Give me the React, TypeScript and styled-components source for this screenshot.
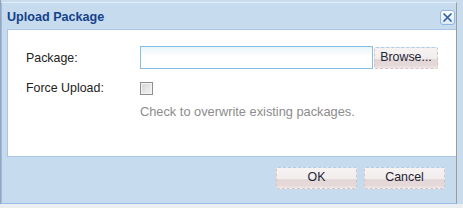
import React from 'react'
import styled, { createGlobalStyle } from 'styled-components'

const GlobalStyle = createGlobalStyle`
  html, body {
    margin: 0;
    padding: 0;
  }
  body {
    background: #e9edf1;
    font-family: "Liberation Sans", Arial, sans-serif;
  }
`

const Page = styled.div`
  width: 463px;
  height: 208px;
  box-sizing: border-box;
  background: #c9dcee;
  border-left: 1px solid #9aa5b1;
  display: flex;
  flex-direction: column;
`

const Stage = styled.div`
  padding-top: 2px;
  height: 204px;
  box-sizing: border-box;
`

const BottomStrip = styled.div`
  flex: 1;
  background: #eceff2;
  margin-left: -1px;
`

const Window = styled.div`
  width: 456px;
  height: 202px;
  box-sizing: border-box;
  border: 1px solid #99bbe8;
  border-top-color: #e3edf8;
  border-right-color: #9c9c9c;
  background: #c7dbee;
  display: flex;
  flex-direction: column;
`

const TitleBar = styled.div`
  height: 26px;
  flex: none;
  display: flex;
  align-items: center;
  justify-content: space-between;
  padding: 0 1px 0 5px;
`

const Title = styled.span`
  font-family: "Liberation Sans", Arial, sans-serif;
  font-weight: bold;
  font-size: 12.6px;
  color: #15428b;
  margin-top: 1px;
`

const CloseButton = styled.button`
  width: 15px;
  height: 15px;
  padding: 0;
  margin-top: 3px;
  border: 1px solid #8db6e2;
  border-radius: 3px;
  background: linear-gradient(#ffffff, #dbe8f6);
  display: flex;
  align-items: center;
  justify-content: center;
`

const Body = styled.div`
  height: 128px;
  flex: none;
  box-sizing: border-box;
  margin-left: 5px;
  background: #ffffff;
  border: 1px solid #a9c6e6;
  border-right: none;
  padding: 16px 0 0 18px;
`

const Row = styled.div<{ $top?: number }>`
  display: flex;
  align-items: center;
  margin-top: ${p => p.$top ?? 0}px;
`

const Label = styled.label`
  width: 114px;
  flex: none;
  font-size: 12.4px;
  color: #222;
`

const TextInput = styled.input`
  width: 233px;
  height: 23px;
  box-sizing: border-box;
  border: 1px solid #86bfe9;
  background: linear-gradient(#e9f5f9, #ffffff 9px);
  padding: 0 3px;
  margin: 0;
  outline: none;
`

const Button = styled.button<{ $w: number }>`
  width: ${p => p.$w}px;
  height: 22px;
  box-sizing: border-box;
  padding: 0 0 2px;
  border: 1px dashed #d7c2c4;
  border-top-color: #a8cfee;
  border-radius: 2px;
  background: linear-gradient(#f7f3f3 0, #f2eded 55%, #e3d6d6 58%, #e5d9d9 88%, #efe8e8 100%);
  font-family: "Liberation Sans", Arial, sans-serif;
  font-size: 12.4px;
  color: #1d2433;
`

const Checkbox = styled.span`
  width: 13px;
  height: 13px;
  box-sizing: border-box;
  border: 1px solid #8e8e8e;
  box-shadow: inset 0 0 0 1px #f4f4f4;
  background: linear-gradient(135deg, #d4d4d4, #f6f6f6);
  display: block;
`

const Help = styled.div`
  margin: 9px 0 0 114px;
  font-size: 12.8px;
  line-height: 16px;
  color: #8c8c8c;
`

const Footer = styled.div`
  flex: 1;
  display: flex;
  justify-content: flex-end;
  align-items: flex-start;
  gap: 7px;
  padding: 10px 11px 0 0;
`

export default function App() {
  return (
    <>
      <GlobalStyle />
      <Page>
        <Stage>
          <Window>
            <TitleBar>
              <Title>Upload Package</Title>
              <CloseButton aria-label="Close">
                <svg width="11" height="11" viewBox="0 0 11 11">
                  <path d="M2 2 L9 9 M9 2 L2 9" stroke="#2d5ea8" strokeWidth="1.7" strokeLinecap="round" />
                </svg>
              </CloseButton>
            </TitleBar>
            <Body>
              <Row>
                <Label>Package:</Label>
                <TextInput type="text" />
                <Button $w={64} style={{ marginLeft: 1 }}>Browse...</Button>
              </Row>
              <Row $top={12}>
                <Label>Force Upload:</Label>
                <Checkbox />
              </Row>
              <Help>Check to overwrite existing packages.</Help>
            </Body>
            <Footer>
              <Button $w={81}>OK</Button>
              <Button $w={81}>Cancel</Button>
            </Footer>
          </Window>
        </Stage>
        <BottomStrip />
      </Page>
    </>
  )
}
